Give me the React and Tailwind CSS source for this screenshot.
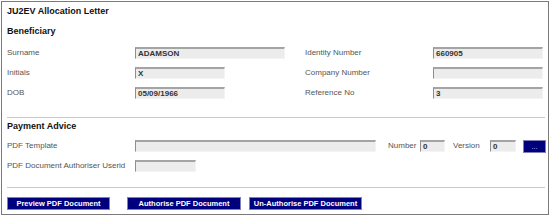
import React from 'react';

const font = { fontFamily: '"Liberation Sans", Arial, sans-serif' };

const inputCls =
  'h-[12px] bg-[#ececec] border-t-2 border-l border-t-[#a4a4a4] border-l-[#8e8e8e] border-b border-r border-b-[#f4f4f4] border-r-[#f4f4f4] text-[8px] font-bold text-[#333] leading-[8px] pl-[2px] flex items-center whitespace-nowrap';

const labelCls = 'text-[8px] text-[#555] whitespace-nowrap';

const Field = ({ value, w }) => (
  <div className={inputCls} style={{ width: w }}>
    {value}
  </div>
);

const Row = ({ label, value, w, rLabel, rValue }) => (
  <div className="flex items-center h-[20px]">
    <div className={`w-[128px] ${labelCls}`}>{label}</div>
    <div className="w-[170px]">
      <Field value={value} w={w} />
    </div>
    <div className={`w-[128px] ${labelCls}`}>{rLabel}</div>
    <Field value={rValue} w={110} />
  </div>
);

const NavyButton = ({ children, w }) => (
  <button
    className="h-[13px] bg-[#00007f] border border-[#8080b4] text-white text-[7.5px] font-bold leading-[8px] flex items-center justify-center whitespace-nowrap"
    style={{ width: w }}
  >
    {children}
  </button>
);

export default function App() {
  return (
    <div className="bg-white w-[553px] h-[218px] pt-px pl-px" style={font}>
      <div className="w-[548px] h-[214px] border border-[#7a7a7a] pl-[5px] pr-[2px] flex flex-col">
        <div className="h-[19px] flex items-center text-[9px] font-bold text-[#111]">
          JU2EV Allocation Letter
        </div>
        <div className="h-[22px] flex items-center text-[9px] font-bold text-[#111]">
          Beneficiary
        </div>
        <Row label="Surname" value="ADAMSON" w={150} rLabel="Identity Number" rValue="660905" />
        <Row label="Initials" value="X" w={90} rLabel="Company Number" rValue="" />
        <Row label="DOB" value="05/09/1966" w={90} rLabel="Reference No" rValue="3" />

        <div className="mt-[14px] h-px bg-[#c8c8c8] w-[538px]" />

        <div className="h-[18px] flex items-center text-[9px] font-bold text-[#111]">
          Payment Advice
        </div>
        <div className="flex items-center h-[20px]">
          <div className={`w-[128px] ${labelCls}`}>PDF Template</div>
          <Field value="" w={241} />
          <div className={`ml-[12px] w-[32px] ${labelCls}`}>Number</div>
          <Field value="0" w={25} />
          <div className={`ml-[8px] w-[37px] ${labelCls}`}>Version</div>
          <Field value="0" w={26} />
          <button className="ml-[7px] w-[23px] h-[13px] bg-[#00007f] border border-[#8080b4] text-[#c8c8e8] text-[7px] leading-[7px] flex items-end justify-center pb-[2px]">
            ...
          </button>
        </div>
        <div className="flex items-center h-[20px]">
          <div className={`w-[128px] ${labelCls}`}>PDF Document Authoriser Userid</div>
          <Field value="" w={61} />
        </div>

        <div className="mt-[11px] h-px bg-[#c8c8c8] w-[538px]" />

        <div className="mt-[9px] flex items-center">
          <NavyButton w={103}>Preview PDF Document</NavyButton>
          <div className="ml-[17px]">
            <NavyButton w={114}>Authorise PDF Document</NavyButton>
          </div>
          <div className="ml-[8px]">
            <NavyButton w={113}>Un-Authorise PDF Document</NavyButton>
          </div>
        </div>
      </div>
    </div>
  );
}
